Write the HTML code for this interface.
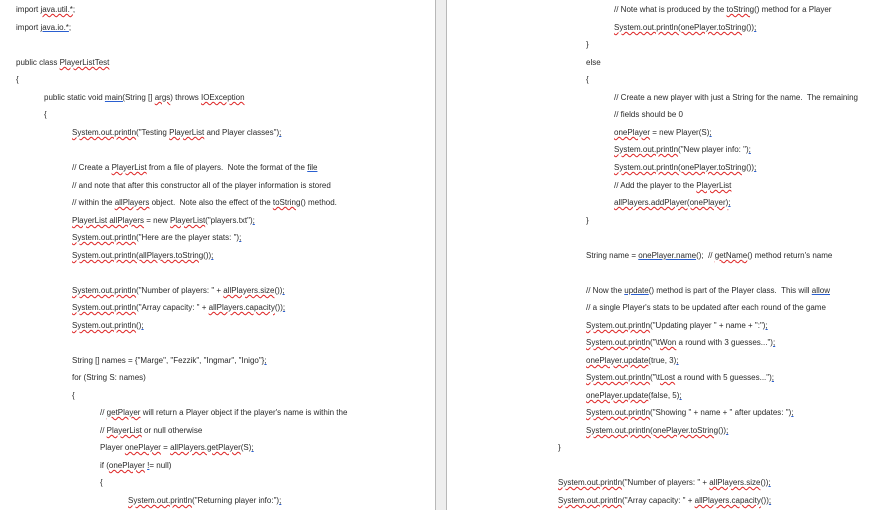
<!DOCTYPE html>
<html><head><meta charset="utf-8"><style>
html,body{margin:0;padding:0;width:890px;height:510px;overflow:hidden;background:#fff;}
.gap{position:absolute;left:435px;top:0;width:10px;height:510px;background:#eeeeee;border-left:1px solid #b8b8b8;border-right:1px solid #b8b8b8;}
.l{position:absolute;font-family:"Liberation Sans",sans-serif;font-size:8px;color:#2a2a2a;white-space:pre;line-height:10px;}
.r{text-decoration:underline wavy #d22;text-decoration-thickness:0.6px;text-underline-offset:1px;}
.b{text-decoration:underline #2a5fd0;text-decoration-thickness:0.7px;text-underline-offset:1px;}
</style></head><body>
<div class="gap"></div>
<div class="l" style="left:16px;top:5px">import <span class="r">java.util.*</span>;</div>
<div class="l" style="left:16px;top:23px">import <span class="b">java.io.*</span>;</div>
<div class="l" style="left:16px;top:58px">public class <span class="r">PlayerListTest</span></div>
<div class="l" style="left:16px;top:75px">{</div>
<div class="l" style="left:44px;top:93px">public static void <span class="b">main(</span>String [] <span class="r">args</span>) throws <span class="r">IOException</span></div>
<div class="l" style="left:44px;top:110px">{</div>
<div class="l" style="left:72px;top:128px"><span class="r">System.out.println</span>("Testing <span class="r">PlayerList</span> and Player classes")<span class="b">;</span></div>
<div class="l" style="left:72px;top:163px">// Create a <span class="r">PlayerList</span> from a file of players.  Note the format of the <span class="b">file</span></div>
<div class="l" style="left:72px;top:181px">// and note that after this constructor all of the player information is stored</div>
<div class="l" style="left:72px;top:198px">// within the <span class="r">allPlayers</span> object.  Note also the effect of the <span class="r">toString</span>() method.</div>
<div class="l" style="left:72px;top:216px"><span class="r">PlayerList allPlayers</span> = new <span class="r">PlayerList</span>("players.txt")<span class="b">;</span></div>
<div class="l" style="left:72px;top:233px"><span class="r">System.out.println</span>("Here are the player stats: ")<span class="b">;</span></div>
<div class="l" style="left:72px;top:251px"><span class="r">System.out.println(allPlayers.toString</span>())<span class="b">;</span></div>
<div class="l" style="left:72px;top:286px"><span class="r">System.out.println</span>("Number of players: " + <span class="r">allPlayers.size</span>())<span class="b">;</span></div>
<div class="l" style="left:72px;top:303px"><span class="r">System.out.println</span>("Array capacity: " + <span class="r">allPlayers.capacity</span>())<span class="b">;</span></div>
<div class="l" style="left:72px;top:321px"><span class="r">System.out.println</span>()<span class="b">;</span></div>
<div class="l" style="left:72px;top:356px">String [] names = {"Marge", "Fezzik", "Ingmar", "Inigo"}<span class="b">;</span></div>
<div class="l" style="left:72px;top:373px">for (String S: names)</div>
<div class="l" style="left:72px;top:391px">{</div>
<div class="l" style="left:100px;top:408px">// <span class="r">getPlayer</span> will return a Player object if the player's name is within the</div>
<div class="l" style="left:100px;top:426px">// <span class="r">PlayerList</span> or null otherwise</div>
<div class="l" style="left:100px;top:443px">Player <span class="r">onePlayer</span> = <span class="r">allPlayers.getPlayer</span>(S)<span class="b">;</span></div>
<div class="l" style="left:100px;top:461px">if (<span class="r">onePlayer</span> <span class="b">!</span>= null)</div>
<div class="l" style="left:100px;top:478px">{</div>
<div class="l" style="left:128px;top:496px"><span class="r">System.out.println</span>("Returning player info:")<span class="b">;</span></div>

<div class="l" style="left:614px;top:5px">// Note what is produced by the <span class="r">toString</span>() method for a Player</div>
<div class="l" style="left:614px;top:23px"><span class="r">System.out.println(onePlayer.toString</span>())<span class="b">;</span></div>
<div class="l" style="left:586px;top:40px">}</div>
<div class="l" style="left:586px;top:58px">else</div>
<div class="l" style="left:586px;top:75px">{</div>
<div class="l" style="left:614px;top:93px">// Create a new player with just a String for the name.  The remaining</div>
<div class="l" style="left:614px;top:110px">// fields should be 0</div>
<div class="l" style="left:614px;top:128px"><span class="r">onePlayer</span> = new Player(S)<span class="b">;</span></div>
<div class="l" style="left:614px;top:145px"><span class="r">System.out.println</span>("New player info: ")<span class="b">;</span></div>
<div class="l" style="left:614px;top:163px"><span class="r">System.out.println(onePlayer.toString</span>())<span class="b">;</span></div>
<div class="l" style="left:614px;top:181px">// Add the player to the <span class="r">PlayerList</span></div>
<div class="l" style="left:614px;top:198px"><span class="r">allPlayers.addPlayer(onePlayer)</span><span class="b">;</span></div>
<div class="l" style="left:586px;top:216px">}</div>
<div class="l" style="left:586px;top:251px">String name = <span class="b">onePlayer.name</span>();  // <span class="r">getName</span>() method return's name</div>
<div class="l" style="left:586px;top:286px">// Now the <span class="b">update</span>() method is part of the Player class.  This will <span class="b">allow</span></div>
<div class="l" style="left:586px;top:303px">// a single Player's stats to be updated after each round of the game</div>
<div class="l" style="left:586px;top:321px"><span class="r">System.out.println</span>("Updating player " + name + ":")<span class="b">;</span></div>
<div class="l" style="left:586px;top:338px"><span class="r">System.out.println</span>("\t<span class="r">Won</span> a round with 3 guesses...")<span class="b">;</span></div>
<div class="l" style="left:586px;top:356px"><span class="r">onePlayer.update</span>(true, 3)<span class="b">;</span></div>
<div class="l" style="left:586px;top:373px"><span class="r">System.out.println</span>("\t<span class="r">Lost</span> a round with 5 guesses...")<span class="b">;</span></div>
<div class="l" style="left:586px;top:391px"><span class="r">onePlayer.update</span>(false, 5)<span class="b">;</span></div>
<div class="l" style="left:586px;top:408px"><span class="r">System.out.println</span>("Showing " + name + " after updates: ")<span class="b">;</span></div>
<div class="l" style="left:586px;top:426px"><span class="r">System.out.println(onePlayer.toString</span>())<span class="b">;</span></div>
<div class="l" style="left:558px;top:443px">}</div>
<div class="l" style="left:558px;top:478px"><span class="r">System.out.println</span>("Number of players: " + <span class="r">allPlayers.size</span>())<span class="b">;</span></div>
<div class="l" style="left:558px;top:496px"><span class="r">System.out.println</span>("Array capacity: " + <span class="r">allPlayers.capacity</span>())<span class="b">;</span></div>
</body></html>
